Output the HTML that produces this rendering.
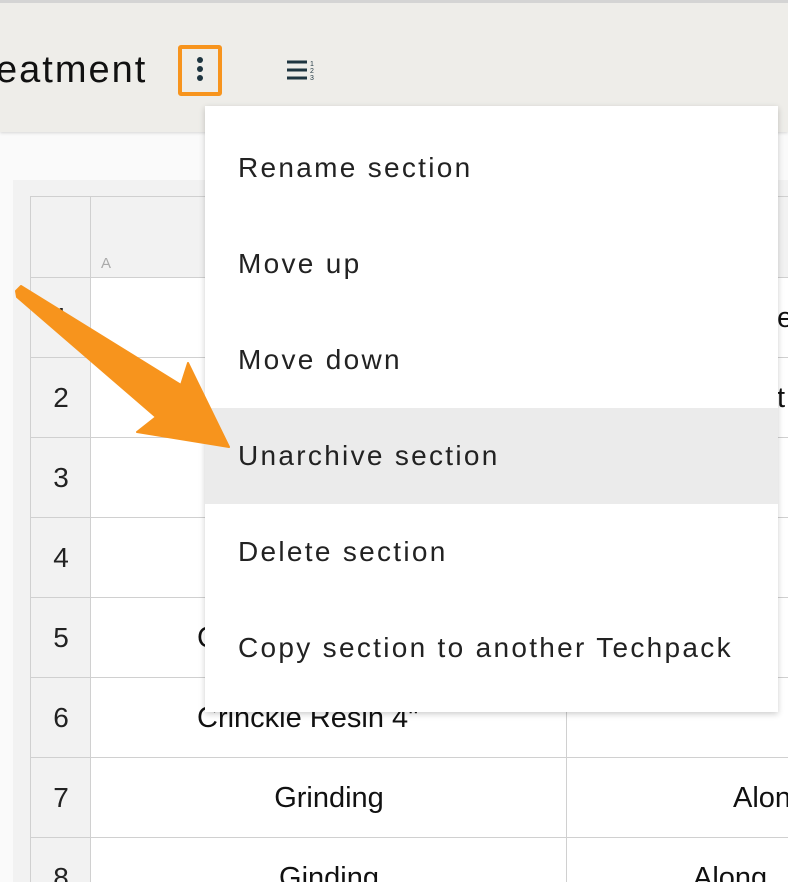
<!DOCTYPE html>
<html><head><meta charset="utf-8"><style>
*{margin:0;padding:0;box-sizing:border-box}
html{width:788px;height:882px;overflow:hidden}
body{width:788px;height:882px;overflow:hidden;background:#fafafa;font-family:"Liberation Sans",sans-serif;position:relative}
.hdr{position:absolute;left:0;top:0;width:788px;height:132px;background:#eeede9;border-top:3px solid #d4d4d4;box-shadow:0 1px 3px rgba(0,0,0,.15)}
.title{position:absolute;left:-4px;top:46px;font-size:38px;letter-spacing:2px;color:#111}
.kebab{position:absolute;left:178px;top:42px;width:44px;height:51px;border:4px solid #f7941d;border-radius:3px}
.kebab i{position:absolute;left:15px;width:6px;height:6px;border-radius:50%;background:#1e3540}
.tbl{position:absolute;left:13px;top:180px;width:800px;height:720px;background:#f2f2f2}
.cell{position:absolute;border:1.5px solid #d0d0d0;background:#fff;font-size:29px;color:#111;display:flex;align-items:center}
.rn{background:#f2f2f2;justify-content:center;font-size:28px;color:#222}
.menu{position:absolute;left:205px;top:106px;width:573px;height:606px;background:#fff;box-shadow:0 2px 6px rgba(0,0,0,.2)}
.it{height:96px;display:flex;align-items:center;padding-left:33px;font-size:28px;letter-spacing:2.3px;color:#222}
.menu .first{margin-top:14px}
.hl{background:#ebebeb}
</style></head><body>
<div class="hdr">
<div class="title">eatment</div>
<div class="kebab"><i style="top:8px"></i><i style="top:17px"></i><i style="top:26px"></i></div>
<svg style="position:absolute;left:287px;top:56px" width="32" height="24" viewBox="0 0 32 24"><g stroke="#1e3540" stroke-width="3"><line x1="0" y1="3" x2="20" y2="3"/><line x1="0" y1="11" x2="20" y2="11"/><line x1="0" y1="19" x2="20" y2="19"/></g><text x="23" y="7" font-size="7" fill="#1e3540">1</text><text x="23" y="14" font-size="7" fill="#1e3540">2</text><text x="23" y="21" font-size="7" fill="#1e3540">3</text></svg>
</div>
<div class="tbl"></div>
<div class="cell rn" style="left:30px;top:196px;width:62px;height:83px;background:#f2f2f2"></div>
<div class="cell" style="left:90px;top:196px;width:720px;height:83px;background:#f2f2f2;align-items:flex-end;padding:0 0 6px 10px;font-size:15px;color:#aaa">A</div>
<div class="cell rn" style="left:30px;top:277px;width:62px;height:82px">1</div>
<div class="cell rn" style="left:30px;top:357px;width:62px;height:82px">2</div>
<div class="cell rn" style="left:30px;top:437px;width:62px;height:82px">3</div>
<div class="cell rn" style="left:30px;top:517px;width:62px;height:82px">4</div>
<div class="cell rn" style="left:30px;top:597px;width:62px;height:82px">5</div>
<div class="cell rn" style="left:30px;top:677px;width:62px;height:82px">6</div>
<div class="cell rn" style="left:30px;top:757px;width:62px;height:82px">7</div>
<div class="cell rn" style="left:30px;top:837px;width:62px;height:82px">8</div>
<div class="cell" style="left:90px;top:277px;width:478px;height:82px"></div>
<div class="cell" style="left:90px;top:357px;width:478px;height:82px"></div>
<div class="cell" style="left:90px;top:437px;width:478px;height:82px"></div>
<div class="cell" style="left:90px;top:517px;width:478px;height:82px"></div>
<div class="cell" style="left:90px;top:597px;width:478px;height:82px;padding-left:106px">C</div>
<div class="cell" style="left:90px;top:677px;width:478px;height:82px;padding-left:106px">Crinckle Resin 4"</div>
<div class="cell" style="left:90px;top:757px;width:478px;height:82px;justify-content:center">Grinding</div>
<div class="cell" style="left:90px;top:837px;width:478px;height:82px;justify-content:center">Ginding</div>
<div class="cell" style="left:566px;top:277px;width:300px;height:82px;padding-left:210px">e</div>
<div class="cell" style="left:566px;top:357px;width:300px;height:82px;padding-left:210px">t</div>
<div class="cell" style="left:566px;top:437px;width:300px;height:82px"></div>
<div class="cell" style="left:566px;top:517px;width:300px;height:82px"></div>
<div class="cell" style="left:566px;top:597px;width:300px;height:82px"></div>
<div class="cell" style="left:566px;top:677px;width:300px;height:82px"></div>
<div class="cell" style="left:566px;top:757px;width:300px;height:82px;padding-left:166px">Alon</div>
<div class="cell" style="left:566px;top:837px;width:300px;height:82px;padding-left:126px">Along</div>
<div class="menu">
<div class="it first">Rename section</div>
<div class="it">Move up</div>
<div class="it">Move down</div>
<div class="it hl">Unarchive section</div>
<div class="it">Delete section</div>
<div class="it">Copy section to another Techpack</div>
</div>
<svg style="position:absolute;left:0;top:0" width="788" height="882"><polygon points="16,291 21,286 181,385 188,363 229,447 137,432 156,417 17,297" fill="#f7941d" stroke="#f7941d" stroke-width="2" stroke-linejoin="round"/></svg>
</body></html>
